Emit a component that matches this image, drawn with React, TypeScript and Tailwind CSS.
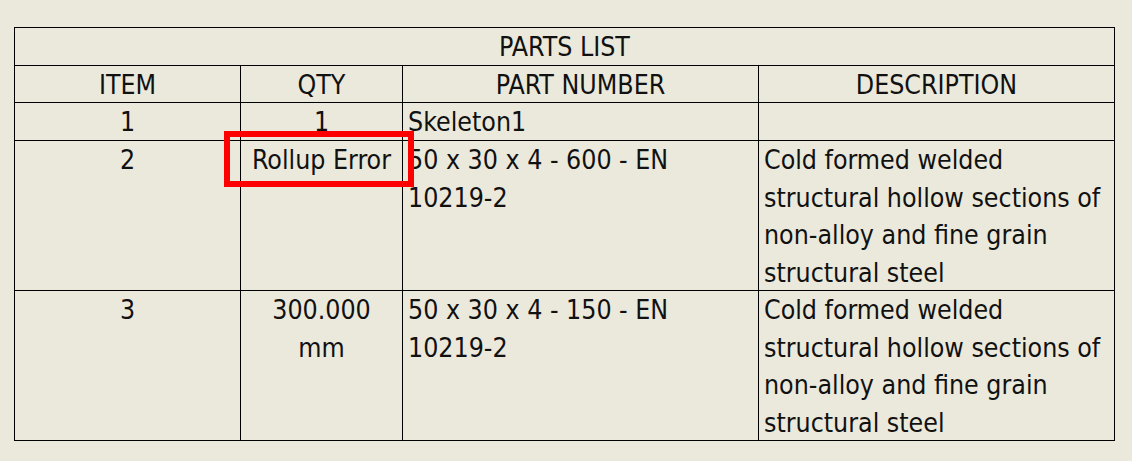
import React from "react";

const font = { fontFamily: '"DejaVu Sans Condensed", "DejaVu Sans", sans-serif' };

export default function App() {
  return (
    <div
      className="w-[1132px] h-[461px] bg-[#ebe9dc] text-[#111] overflow-hidden pt-[27px] pl-[14px] text-[26.5px] leading-[37.5px]"
      style={font}
    >
      <div className="relative w-[1101px] border border-black">
        {/* title */}
        <div className="h-[37px] flex items-center justify-center pt-[1px]">PARTS LIST</div>
        {/* header */}
        <div className="flex h-[37px] border-t border-black">
          <div className="w-[225px] flex items-center justify-center pt-[2px]">ITEM</div>
          <div className="w-[162px] border-l border-black flex items-center justify-center pt-[2px]">QTY</div>
          <div className="w-[356px] border-l border-black flex items-center justify-center pt-[2px]">PART NUMBER</div>
          <div className="flex-1 border-l border-black flex items-center justify-center pt-[2px]">DESCRIPTION</div>
        </div>
        {/* row 1 */}
        <div className="flex h-[38px] border-t border-black">
          <div className="w-[225px] flex items-center justify-center pt-[1px]">1</div>
          <div className="w-[162px] border-l border-black flex items-center justify-center pt-[1px]">1</div>
          <div className="w-[356px] border-l border-black flex items-center px-[5px] pt-[1px]">Skeleton1</div>
          <div className="flex-1 border-l border-black"></div>
        </div>
        {/* row 2 */}
        <div className="flex h-[150px] border-t border-black">
          <div className="w-[225px] text-center">2</div>
          <div className="w-[162px] border-l border-black text-center">Rollup Error</div>
          <div className="w-[356px] border-l border-black px-[5px]">
            50 x 30 x 4 - 600 - EN
            <br />
            10219-2
          </div>
          <div className="flex-1 border-l border-black px-[5px]">
            Cold formed welded
            <br />
            structural hollow sections of
            <br />
            non-alloy and fine grain
            <br />
            structural steel
          </div>
        </div>
        {/* row 3 */}
        <div className="flex h-[150px] border-t border-black">
          <div className="w-[225px] text-center">3</div>
          <div className="w-[162px] border-l border-black text-center">
            300.000
            <br />
            mm
          </div>
          <div className="w-[356px] border-l border-black px-[5px]">
            50 x 30 x 4 - 150 - EN
            <br />
            10219-2
          </div>
          <div className="flex-1 border-l border-black px-[5px]">
            Cold formed welded
            <br />
            structural hollow sections of
            <br />
            non-alloy and fine grain
            <br />
            structural steel
          </div>
        </div>
        {/* red highlight */}
        <div className="absolute left-[209px] top-[103px] w-[190px] h-[56px] border-[6px] border-[#ff0000]"></div>
      </div>
    </div>
  );
}
